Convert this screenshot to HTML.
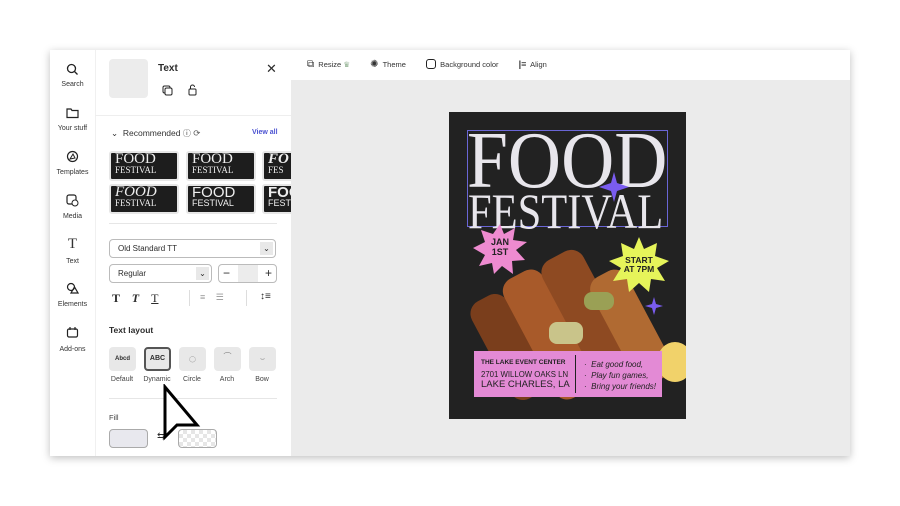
<!DOCTYPE html>
<html><head><meta charset="utf-8"><style>
*{margin:0;padding:0;box-sizing:border-box}
body{width:900px;height:506px;background:#fff;font-family:"Liberation Sans",sans-serif;position:relative;overflow:hidden;color:#2c2c2c}
.a{position:absolute}
.win{left:50px;top:50px;width:800px;height:406px;background:#fff;box-shadow:0 2px 8px rgba(0,0,0,.25);overflow:hidden}
.rl{font-size:7px;color:#333;text-align:center;width:45px;left:0}
.thumb{width:70px;height:30px;background:#1d1d1d;border:2px solid #e6e6e6;border-radius:3px;color:#eee;font-family:"Liberation Serif",serif;overflow:hidden}
.thumb b{display:block;font-size:15px;line-height:13px;font-weight:normal;margin-left:4px}
.thumb i{display:block;font-size:9px;line-height:9px;font-style:normal;margin-left:4px}
.lay{width:27px;height:24px;background:#e8e8e8;border-radius:4px;top:297px}
.lbl{font-size:7px;color:#444;top:326px;text-align:center;width:40px}
.sel{border:1px solid #bbb;border-radius:4px;background:#fff;font-size:8px;padding-left:8px;line-height:17px}
.chev{position:absolute;right:2px;top:2px;width:13px;height:13px;background:#e8e8e8;font-size:8px;text-align:center;line-height:13px}
</style></head><body>
<div class="a win">
 <div class="a" style="left:0;top:0;width:45px;height:406px;background:#fff"></div>
 <svg class="a" style="left:16px;top:13px" width="13" height="13" viewBox="0 0 13 13"><circle cx="5.5" cy="5.5" r="4" fill="none" stroke="#222" stroke-width="1.3"/><path d="M8.5 8.5l3 3" stroke="#222" stroke-width="1.3"/></svg>
 <div class="a rl" style="top:31px">Search</div>
 <svg class="a" style="left:16px;top:57px" width="13" height="12" viewBox="0 0 13 12"><path d="M1 2h4l1 1.5h6V10.5H1z" fill="none" stroke="#222" stroke-width="1.2"/></svg>
 <div class="a rl" style="top:75px">Your stuff</div>
 <svg class="a" style="left:16px;top:100px" width="13" height="13" viewBox="0 0 13 13"><circle cx="6.5" cy="6.5" r="5" fill="none" stroke="#222" stroke-width="1.2"/><path d="M4 9l3-5 2 4z" fill="none" stroke="#222"/></svg>
 <div class="a rl" style="top:119px">Templates</div>
 <svg class="a" style="left:16px;top:144px" width="13" height="13" viewBox="0 0 13 13"><rect x="1" y="1" width="9" height="9" rx="2" fill="none" stroke="#222" stroke-width="1.2"/><circle cx="9" cy="9" r="3" fill="#fff" stroke="#222"/></svg>
 <div class="a rl" style="top:163px">Media</div>
 <div class="a rl" style="top:186px;font-size:15px;font-family:'Liberation Serif',serif">T</div>
 <div class="a rl" style="top:208px">Text</div>
 <svg class="a" style="left:16px;top:232px" width="13" height="13" viewBox="0 0 13 13"><circle cx="5" cy="5" r="3.5" fill="none" stroke="#222" stroke-width="1.2"/><path d="M5 11h7L8.5 5z" fill="none" stroke="#222" stroke-width="1.2"/></svg>
 <div class="a rl" style="top:251px">Elements</div>
 <svg class="a" style="left:16px;top:276px" width="13" height="12" viewBox="0 0 13 12"><rect x="1.5" y="3" width="10" height="8" rx="1.5" fill="none" stroke="#222" stroke-width="1.2"/><path d="M4 1v3M9 1v3" stroke="#222" stroke-width="1.2"/></svg>
 <div class="a rl" style="top:296px">Add-ons</div>
 <div class="a" style="left:45px;top:0;width:196px;height:406px;background:#fff;border-left:1px solid #f0f0f0"></div>
 <div class="a" style="left:59px;top:9px;width:39px;height:39px;background:#ececec;border-radius:4px"></div>
 <div class="a" style="left:108px;top:13px;font-size:10px;font-weight:bold">Text</div>
 <div class="a" style="left:216px;top:11px;font-size:13px">✕</div>
 <svg class="a" style="left:112px;top:35px" width="11" height="11" viewBox="0 0 11 11"><rect x="1" y="1" width="7" height="7" rx="1.5" fill="none" stroke="#222"/><rect x="3" y="3" width="7" height="7" rx="1.5" fill="#fff" stroke="#222"/></svg>
 <svg class="a" style="left:138px;top:34px" width="9" height="12" viewBox="0 0 9 12"><rect x="1" y="5" width="7" height="6" rx="1" fill="none" stroke="#222"/><path d="M2.5 5V3a2 2 0 014 0" fill="none" stroke="#222"/></svg>
 <div class="a" style="left:45px;top:65px;width:196px;height:1px;background:#eee"></div>
 <div class="a" style="left:61px;top:78px;font-size:8.5px;color:#333">⌄&nbsp; Recommended <span style="font-size:8px">ⓘ</span> <span style="color:#555">⟳</span></div>
 <div class="a" style="left:202px;top:79px;font-size:7px;color:#4b52d1;font-weight:bold">View all</div>
 <div class="a thumb" style="left:59px;top:101px"><b>FOOD</b><i>FESTIVAL</i></div>
 <div class="a thumb" style="left:136px;top:101px"><b>FOOD</b><i>FESTIVAL</i></div>
 <div class="a thumb" style="left:212px;top:101px;width:40px"><b style="font-weight:bold;font-style:italic">FO</b><i>FES</i></div>
 <div class="a thumb" style="left:59px;top:134px"><b style="font-style:italic">FOOD</b><i>FESTIVAL</i></div>
 <div class="a thumb" style="left:136px;top:134px;font-family:'Liberation Sans'"><b>FOOD</b><i>FESTIVAL</i></div>
 <div class="a thumb" style="left:212px;top:134px;width:40px;font-family:'Liberation Sans'"><b style="font-weight:bold">FOO</b><i>FESTIV</i></div>
 <div class="a" style="left:59px;top:173px;width:168px;height:1px;background:#e6e6e6"></div>
 <div class="a sel" style="left:59px;top:189px;width:167px;height:19px">Old Standard TT<span class="chev">⌄</span></div>
 <div class="a sel" style="left:59px;top:214px;width:103px;height:19px">Regular<span class="chev">⌄</span></div>
 <div class="a sel" style="left:168px;top:214px;width:59px;height:19px;padding:0"><span class="a" style="left:4px;top:0;font-size:12px">−</span><span class="a" style="left:19px;top:0;width:20px;height:17px;background:#ececec"></span><span class="a" style="left:46px;top:0;font-size:12px">+</span></div>
 <div class="a" style="left:62px;top:241px;font-size:12px;font-family:'Liberation Serif',serif;font-weight:bold;word-spacing:9px">T <i>T</i> <u style="font-weight:normal">T</u></div>
 <div class="a" style="left:139px;top:240px;width:1px;height:16px;background:#ddd"></div>
 <div class="a" style="left:150px;top:242px;font-size:9px;color:#999;word-spacing:8px">≡ ☰</div>
 <div class="a" style="left:196px;top:240px;width:1px;height:16px;background:#ddd"></div>
 <div class="a" style="left:210px;top:241px;font-size:10px;font-weight:bold">↕≡</div>
 <div class="a" style="left:59px;top:275px;font-size:8.5px;font-weight:bold">Text layout</div>
 <div class="a lay" style="left:59px;font-size:6px;font-weight:bold;text-align:center;line-height:24px">Abcd</div>
 <div class="a lay" style="left:94px;border:2px solid #555;font-size:7px;font-weight:bold;text-align:center;line-height:20px">ABC</div>
 <div class="a lay" style="left:129px;color:#888;font-size:13px;text-align:center;line-height:24px">◌</div>
 <div class="a lay" style="left:164px;color:#888;font-size:8px;text-align:center;line-height:20px">⌒</div>
 <div class="a lay" style="left:199px;color:#888;font-size:8px;text-align:center;line-height:24px">⌣</div>
 <div class="a lbl" style="left:52px">Default</div>
 <div class="a lbl" style="left:87px">Dynamic</div>
 <div class="a lbl" style="left:122px">Circle</div>
 <div class="a lbl" style="left:157px">Arch</div>
 <div class="a lbl" style="left:192px">Bow</div>
 <div class="a" style="left:59px;top:348px;width:168px;height:1px;background:#e6e6e6"></div>
 <div class="a" style="left:59px;top:363px;font-size:7.5px;color:#444">Fill</div>
 <div class="a" style="left:59px;top:379px;width:39px;height:19px;background:#e8e8ee;border:1px solid #aaa;border-radius:4px"></div>
 <div class="a" style="left:107px;top:381px;font-size:10px">⇆</div>
 <div class="a" style="left:128px;top:379px;width:39px;height:19px;border:1px solid #aaa;border-radius:4px;background:repeating-conic-gradient(#e6e6e6 0 25%,#fff 0 50%) 0 0/8px 8px"></div>
 <svg class="a" style="left:112px;top:334px" width="48" height="58" viewBox="0 0 48 58"><path d="M3 3v50l12-12h20z" fill="#fff" stroke="#000" stroke-width="3"/></svg>
 <div class="a" style="left:241px;top:0;width:559px;height:30px;background:#fff"></div>
 <div class="a" style="left:241px;top:30px;width:559px;height:376px;background:#ebebeb"></div>
 <div class="a" style="left:257px;top:9px;font-size:7.5px;color:#333;white-space:nowrap">
  <span style="font-size:10px">⧉</span>&nbsp; Resize <span style="color:#8a8">♛</span>
  <span style="margin-left:18px;font-size:10px">✺</span>&nbsp; Theme
  <span style="margin-left:18px;display:inline-block;width:10px;height:10px;border:1.5px solid #222;border-radius:3px;vertical-align:-2px"></span>&nbsp; Background color
  <span style="margin-left:18px;font-size:9px;font-weight:bold">|≡</span>&nbsp; Align</div>
 <div class="a" style="left:399px;top:62px;width:237px;height:307px;background:#222;overflow:hidden">
  <div class="a" style="left:30px;top:130px;width:200px;height:180px">
   <div class="a" style="left:10px;top:50px;width:40px;height:110px;background:#7a3e1c;border-radius:14px;transform:rotate(-28deg)"></div>
   <div class="a" style="left:48px;top:25px;width:44px;height:135px;background:#a85a2a;border-radius:14px;transform:rotate(-28deg)"></div>
   <div class="a" style="left:90px;top:5px;width:46px;height:150px;background:#8e4a22;border-radius:14px;transform:rotate(-28deg)"></div>
   <div class="a" style="left:132px;top:25px;width:40px;height:120px;background:#b06a32;border-radius:14px;transform:rotate(-28deg)"></div>
   <div class="a" style="left:70px;top:80px;width:34px;height:22px;background:#c9c48a;border-radius:8px"></div>
   <div class="a" style="left:105px;top:50px;width:30px;height:18px;background:#9aa055;border-radius:8px"></div>
   <div class="a" style="left:178px;top:100px;width:36px;height:40px;background:#f1d26a;border-radius:50%"></div>
  </div>
  <div class="a" style="left:18px;top:18px;width:201px;height:97px;border:1px solid #6a66d6"></div>
  <div class="a" style="left:18px;top:9px;font-family:'Liberation Serif',serif;font-size:80px;line-height:80px;color:#e8e6ec;transform:scaleX(.92);transform-origin:left;white-space:nowrap">FOOD</div>
  <div class="a" style="left:19px;top:74px;font-family:'Liberation Serif',serif;font-size:50px;line-height:50px;color:#e8e6ec;transform:scaleX(.85);transform-origin:left;white-space:nowrap">FESTIVAL</div>
  <svg class="a" style="left:150px;top:60px" width="30" height="30" viewBox="0 0 30 30"><path d="M15 0l3 11 12 4-12 4-3 11-3-11-12-4 12-4z" fill="#7a5cf0"/></svg>
  <svg class="a" style="left:24px;top:112px" width="54" height="50" viewBox="0 0 54 50"><polygon points="27,0 31,10 42,4 40,16 54,18 43,26 52,36 39,37 40,50 29,42 21,50 19,39 6,42 12,31 0,24 12,18 8,6 20,10" fill="#ee8bd0"/><text x="27" y="21" font-size="9" font-weight="bold" text-anchor="middle" fill="#222" font-family="Liberation Sans">JAN</text><text x="27" y="31" font-size="9" font-weight="bold" text-anchor="middle" fill="#222" font-family="Liberation Sans">1ST</text></svg>
  <svg class="a" style="left:160px;top:125px" width="60" height="55" viewBox="0 0 60 55"><polygon points="30,0 35,12 48,6 46,19 60,24 48,31 56,44 42,42 40,55 30,46 20,55 18,42 4,44 12,31 0,24 14,19 12,6 25,12" fill="#e6f45a"/><text x="30" y="26" font-size="8.5" font-weight="bold" text-anchor="middle" fill="#222" font-family="Liberation Sans">START</text><text x="30" y="35" font-size="8.5" font-weight="bold" text-anchor="middle" fill="#222" font-family="Liberation Sans">AT 7PM</text></svg>
  <svg class="a" style="left:196px;top:185px" width="18" height="18" viewBox="0 0 18 18"><path d="M9 0l2 7 7 2-7 2-2 7-2-7-7-2 7-2z" fill="#7a5cf0"/></svg>
  <div class="a" style="left:25px;top:239px;width:188px;height:46px;background:#e38ad5"></div>
  <div class="a" style="left:126px;top:243px;width:1px;height:38px;background:#222"></div>
  <div class="a" style="left:32px;top:247px;font-size:6.5px;font-weight:bold;color:#222">THE LAKE EVENT CENTER</div>
  <div class="a" style="left:32px;top:258px;font-size:7.8px;color:#222;white-space:nowrap">2701 WILLOW OAKS LN</div>
  <div class="a" style="left:32px;top:267px;font-size:9.5px;color:#222;white-space:nowrap">LAKE CHARLES, LA</div>
  <div class="a" style="left:135px;top:247px;font-size:8px;line-height:11px;font-style:italic;color:#222">·&nbsp; Eat good food,<br>·&nbsp; Play fun games,<br>·&nbsp; Bring your friends!</div>
 </div>
</div>
</body></html>
